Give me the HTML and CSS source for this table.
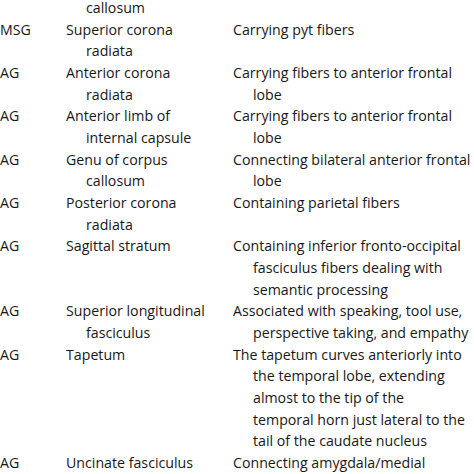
FILE: index.html
```html
<!DOCTYPE html>
<html>
<head>
<meta charset="utf-8">
<link rel="stylesheet" href="styles.css">
</head>
<body>
<table class="tbl">
<tbody>
<tr><td class="c1"></td><td class="c2 cont">callosum</td><td class="c3"></td></tr>
<tr><td class="c1">MSG</td><td class="c2">Superior corona<br>radiata</td><td class="c3">Carrying pyt fibers</td></tr>
<tr><td class="c1">AG</td><td class="c2">Anterior corona<br>radiata</td><td class="c3">Carrying fibers to anterior frontal<br>lobe</td></tr>
<tr><td class="c1">AG</td><td class="c2">Anterior limb of<br>internal capsule</td><td class="c3">Carrying fibers to anterior frontal<br>lobe</td></tr>
<tr><td class="c1">AG</td><td class="c2">Genu of corpus<br>callosum</td><td class="c3">Connecting bilateral anterior frontal<br>lobe</td></tr>
<tr><td class="c1">AG</td><td class="c2">Posterior corona<br>radiata</td><td class="c3">Containing parietal fibers</td></tr>
<tr><td class="c1">AG</td><td class="c2">Sagittal stratum</td><td class="c3">Containing inferior fronto-occipital<br>fasciculus fibers dealing with<br>semantic processing</td></tr>
<tr><td class="c1">AG</td><td class="c2">Superior longitudinal<br>fasciculus</td><td class="c3">Associated with speaking, tool use,<br>perspective taking, and empathy</td></tr>
<tr><td class="c1">AG</td><td class="c2">Tapetum</td><td class="c3">The tapetum curves anteriorly into<br>the temporal lobe, extending<br>almost to the tip of the<br>temporal horn just lateral to the<br>tail of the caudate nucleus</td></tr>
<tr><td class="c1">AG</td><td class="c2">Uncinate fasciculus</td><td class="c3">Connecting amygdala/medial</td></tr>
</tbody>
</table>
</body>
</html>
```

FILE: styles.css
```css
html, body {
  margin: 0;
  padding: 0;
  background: #ffffff;
}
body {
  width: 474px;
  height: 474px;
  overflow: hidden;
  font-family: "Open Sans", "Noto Sans", sans-serif;
  font-size: 14.2px;
  line-height: 21.67px;
  color: #181818;
}
.tbl {
  border-collapse: collapse;
  margin-top: -3px;
  table-layout: fixed;
  width: 474px;
}
.tbl td {
  padding: 0;
  vertical-align: top;
  white-space: nowrap;
  overflow: hidden;
}
.c1 {
  width: 66px;
}
.tbl .c2 {
  width: 147px;
  padding-left: 20px;
  text-indent: -20px;
}
.tbl .c3 {
  padding-left: 20px;
  text-indent: -20px;
}
.tbl .c2.cont {
  text-indent: 0;
}
```
